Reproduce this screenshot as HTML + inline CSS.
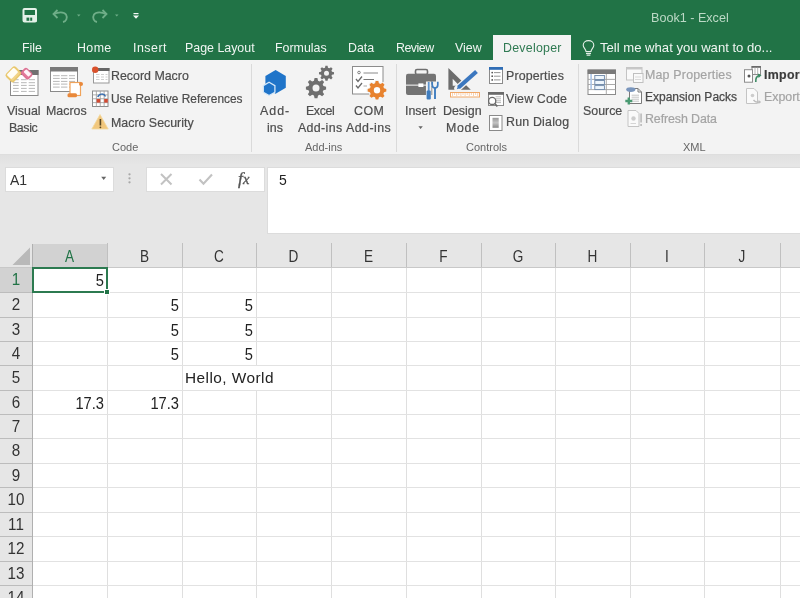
<!DOCTYPE html>
<html><head><meta charset="utf-8">
<style>
*{margin:0;padding:0;box-sizing:border-box}
html,body{width:800px;height:598px;overflow:hidden;background:#e6e6e6}
body{font-family:"Liberation Sans",sans-serif;position:relative}
#root{position:absolute;left:0;top:0;width:800px;height:598px;overflow:hidden;will-change:transform}
.a{position:absolute;white-space:nowrap;line-height:1}
#title{left:0;top:0;width:800px;height:60px;background:#217346}
#devtab{left:493px;top:35px;width:78px;height:25px;background:#f3f3f3}
.tab{font-size:12.4px;color:#f0f5f2;top:42px}
#ribbon{left:0;top:60px;width:800px;height:95px;background:#f3f3f3;border-bottom:1px solid #dedede}
.rt{font-size:12.4px;color:#4d4d4d;-webkit-text-stroke:0.2px #4d4d4d}
.gl{font-size:11px;color:#666;top:142px}
.sep{width:1px;background:#dadada;top:64px;height:88px}
.dis{color:#a4a4a4;-webkit-text-stroke-color:#a4a4a4}
#fbar{left:0;top:155px;width:800px;height:89px;background:#e6e6e6}
.box{background:#fff;border:1px solid #dcdcdc}
#grid{left:0;top:244px;width:800px;height:354px;background:#fff}
.ch{font-size:14px;color:#333}
.cell{font-size:15.4px;color:#222;letter-spacing:0.45px}
.num{font-size:16.5px;letter-spacing:0;transform:scaleX(0.89);transform-origin:right center}
</style></head><body><div id="root">
<div id="title" class="a"></div>
<div id="devtab" class="a"></div>
<div class="a tab" style="left:22px">File</div>
<div class="a tab" style="left:77px;letter-spacing:0.4px">Home</div>
<div class="a tab" style="left:133px;letter-spacing:0.5px">Insert</div>
<div class="a tab" style="left:185px">Page Layout</div>
<div class="a tab" style="left:275px">Formulas</div>
<div class="a tab" style="left:348px">Data</div>
<div class="a tab" style="left:396px;letter-spacing:-0.5px">Review</div>
<div class="a tab" style="left:455px">View</div>
<div class="a tab" style="left:503px;color:#2f7a52;letter-spacing:0.25px">Developer</div>
<div class="a tab" style="left:600px;font-size:13.1px;top:41px">Tell me what you want to do...</div>
<div class="a" style="left:651px;top:12px;font-size:12.6px;color:#bcd9c6">Book1 - Excel</div>

<div id="ribbon" class="a"></div>
<!-- Code group -->
<div class="a rt" style="left:7px;top:105px">Visual</div>
<div class="a rt" style="left:9px;top:122px;letter-spacing:-0.4px">Basic</div>
<div class="a rt" style="left:46px;top:105px">Macros</div>
<div class="a rt" style="left:111px;top:70px">Record Macro</div>
<div class="a rt" style="left:111px;top:94px;font-size:11.9px">Use Relative References</div>
<div class="a rt" style="left:111px;top:117px">Macro Security</div>
<div class="a gl" style="left:112px">Code</div>
<div class="a sep" style="left:251px"></div>
<!-- Add-ins group -->
<div class="a rt" style="left:260px;top:105px;letter-spacing:1px">Add-</div>
<div class="a rt" style="left:267px;top:122px">ins</div>
<div class="a rt" style="left:306px;top:105px;letter-spacing:-0.4px">Excel</div>
<div class="a rt" style="left:298px;top:122px;letter-spacing:0.35px">Add-ins</div>
<div class="a rt" style="left:354px;top:105px;letter-spacing:0.5px">COM</div>
<div class="a rt" style="left:346px;top:122px;letter-spacing:0.45px">Add-ins</div>
<div class="a gl" style="left:305px">Add-ins</div>
<div class="a sep" style="left:396px"></div>
<!-- Controls group -->
<div class="a rt" style="left:405px;top:105px">Insert</div>
<div class="a rt" style="left:443px;top:105px">Design</div>
<div class="a rt" style="left:446px;top:122px;letter-spacing:0.7px">Mode</div>
<div class="a rt" style="left:506px;top:70px;letter-spacing:0.15px">Properties</div>
<div class="a rt" style="left:506px;top:93px;letter-spacing:0.15px">View Code</div>
<div class="a rt" style="left:506px;top:116px;letter-spacing:0.2px">Run Dialog</div>
<div class="a gl" style="left:466px">Controls</div>
<div class="a sep" style="left:578px"></div>
<!-- XML group -->
<div class="a rt" style="left:583px;top:105px">Source</div>
<div class="a rt dis" style="left:645px;top:69px;letter-spacing:0.2px">Map Properties</div>
<div class="a rt" style="left:645px;top:91px;font-size:12px;-webkit-text-stroke:0.25px #444">Expansion Packs</div>
<div class="a rt dis" style="left:645px;top:113px;letter-spacing:-0.1px">Refresh Data</div>
<div class="a rt" style="left:764px;top:69px;font-weight:bold;color:#3a3a3a;letter-spacing:0.3px">Import</div>
<div class="a rt dis" style="left:764px;top:91px">Export</div>
<div class="a gl" style="left:683px">XML</div>

<div id="fbar" class="a"></div>
<div class="a" style="left:0;top:155px;width:800px;height:9px;background:linear-gradient(#e1e1e1,#e5e5e5)"></div>
<div class="a box" style="left:5px;top:167px;width:109px;height:25px"></div>
<div class="a" style="left:10px;top:173px;font-size:14px;color:#333">A1</div>
<div class="a box" style="left:146px;top:167px;width:119px;height:25px"></div>
<div class="a box" style="left:267px;top:167px;width:540px;height:67px"></div>
<div class="a" style="left:279px;top:173px;font-size:14px;color:#222">5</div>

<div id="grid" class="a"></div>
<!--GRID-->
<div class="a" style="left:0;top:244px;width:800px;height:24px;background:#e6e6e6"></div>
<div class="a" style="left:32px;top:244px;width:75px;height:24px;background:#d2d2d2"></div>
<div class="a" style="left:0;top:268px;width:32px;height:330px;background:#e6e6e6"></div>
<div class="a" style="left:0;top:268px;width:32px;height:24px;background:#d2d2d2"></div>
<div class="a" style="left:107px;top:268px;width:1px;height:330px;background:#dfdfdf"></div>
<div class="a" style="left:107px;top:243px;width:1px;height:24px;background:#c0c0c0"></div>
<div class="a" style="left:182px;top:268px;width:1px;height:330px;background:#dfdfdf"></div>
<div class="a" style="left:182px;top:243px;width:1px;height:24px;background:#c0c0c0"></div>
<div class="a" style="left:256px;top:268px;width:1px;height:330px;background:#dfdfdf"></div>
<div class="a" style="left:256px;top:243px;width:1px;height:24px;background:#c0c0c0"></div>
<div class="a" style="left:331px;top:268px;width:1px;height:330px;background:#dfdfdf"></div>
<div class="a" style="left:331px;top:243px;width:1px;height:24px;background:#c0c0c0"></div>
<div class="a" style="left:406px;top:268px;width:1px;height:330px;background:#dfdfdf"></div>
<div class="a" style="left:406px;top:243px;width:1px;height:24px;background:#c0c0c0"></div>
<div class="a" style="left:481px;top:268px;width:1px;height:330px;background:#dfdfdf"></div>
<div class="a" style="left:481px;top:243px;width:1px;height:24px;background:#c0c0c0"></div>
<div class="a" style="left:555px;top:268px;width:1px;height:330px;background:#dfdfdf"></div>
<div class="a" style="left:555px;top:243px;width:1px;height:24px;background:#c0c0c0"></div>
<div class="a" style="left:630px;top:268px;width:1px;height:330px;background:#dfdfdf"></div>
<div class="a" style="left:630px;top:243px;width:1px;height:24px;background:#c0c0c0"></div>
<div class="a" style="left:704px;top:268px;width:1px;height:330px;background:#dfdfdf"></div>
<div class="a" style="left:704px;top:243px;width:1px;height:24px;background:#c0c0c0"></div>
<div class="a" style="left:780px;top:268px;width:1px;height:330px;background:#dfdfdf"></div>
<div class="a" style="left:780px;top:243px;width:1px;height:24px;background:#c0c0c0"></div>
<div class="a" style="left:32px;top:292px;width:768px;height:1px;background:#e2e2e2"></div>
<div class="a" style="left:0;top:292px;width:32px;height:1px;background:#bcbcbc"></div>
<div class="a" style="left:32px;top:317px;width:768px;height:1px;background:#e2e2e2"></div>
<div class="a" style="left:0;top:317px;width:32px;height:1px;background:#bcbcbc"></div>
<div class="a" style="left:32px;top:341px;width:768px;height:1px;background:#e2e2e2"></div>
<div class="a" style="left:0;top:341px;width:32px;height:1px;background:#bcbcbc"></div>
<div class="a" style="left:32px;top:365px;width:768px;height:1px;background:#e2e2e2"></div>
<div class="a" style="left:0;top:365px;width:32px;height:1px;background:#bcbcbc"></div>
<div class="a" style="left:32px;top:390px;width:768px;height:1px;background:#e2e2e2"></div>
<div class="a" style="left:0;top:390px;width:32px;height:1px;background:#bcbcbc"></div>
<div class="a" style="left:32px;top:414px;width:768px;height:1px;background:#e2e2e2"></div>
<div class="a" style="left:0;top:414px;width:32px;height:1px;background:#bcbcbc"></div>
<div class="a" style="left:32px;top:438px;width:768px;height:1px;background:#e2e2e2"></div>
<div class="a" style="left:0;top:438px;width:32px;height:1px;background:#bcbcbc"></div>
<div class="a" style="left:32px;top:463px;width:768px;height:1px;background:#e2e2e2"></div>
<div class="a" style="left:0;top:463px;width:32px;height:1px;background:#bcbcbc"></div>
<div class="a" style="left:32px;top:487px;width:768px;height:1px;background:#e2e2e2"></div>
<div class="a" style="left:0;top:487px;width:32px;height:1px;background:#bcbcbc"></div>
<div class="a" style="left:32px;top:512px;width:768px;height:1px;background:#e2e2e2"></div>
<div class="a" style="left:0;top:512px;width:32px;height:1px;background:#bcbcbc"></div>
<div class="a" style="left:32px;top:536px;width:768px;height:1px;background:#e2e2e2"></div>
<div class="a" style="left:0;top:536px;width:32px;height:1px;background:#bcbcbc"></div>
<div class="a" style="left:32px;top:561px;width:768px;height:1px;background:#e2e2e2"></div>
<div class="a" style="left:0;top:561px;width:32px;height:1px;background:#bcbcbc"></div>
<div class="a" style="left:32px;top:585px;width:768px;height:1px;background:#e2e2e2"></div>
<div class="a" style="left:0;top:585px;width:32px;height:1px;background:#bcbcbc"></div>
<div class="a" style="left:0;top:267px;width:800px;height:1px;background:#c8c8c8"></div>
<div class="a" style="left:32px;top:244px;width:1px;height:354px;background:#b0b0b0"></div>
<div class="a ch" style="left:32px;width:75px;text-align:center;top:249px;color:#217346;font-size:15.8px;transform:scaleX(0.86)">A</div>
<div class="a ch" style="left:107px;width:75px;text-align:center;top:249px;color:#333;font-size:15.8px;transform:scaleX(0.86)">B</div>
<div class="a ch" style="left:182px;width:74px;text-align:center;top:249px;color:#333;font-size:15.8px;transform:scaleX(0.86)">C</div>
<div class="a ch" style="left:256px;width:75px;text-align:center;top:249px;color:#333;font-size:15.8px;transform:scaleX(0.86)">D</div>
<div class="a ch" style="left:331px;width:75px;text-align:center;top:249px;color:#333;font-size:15.8px;transform:scaleX(0.86)">E</div>
<div class="a ch" style="left:406px;width:75px;text-align:center;top:249px;color:#333;font-size:15.8px;transform:scaleX(0.86)">F</div>
<div class="a ch" style="left:481px;width:74px;text-align:center;top:249px;color:#333;font-size:15.8px;transform:scaleX(0.86)">G</div>
<div class="a ch" style="left:555px;width:75px;text-align:center;top:249px;color:#333;font-size:15.8px;transform:scaleX(0.86)">H</div>
<div class="a ch" style="left:630px;width:74px;text-align:center;top:249px;color:#333;font-size:15.8px;transform:scaleX(0.86)">I</div>
<div class="a ch" style="left:704px;width:76px;text-align:center;top:249px;color:#333;font-size:15.8px;transform:scaleX(0.86)">J</div>
<div class="a ch" style="left:0;width:32px;text-align:center;top:271px;color:#217346;font-size:16.5px;transform:scaleX(0.92)">1</div>
<div class="a ch" style="left:0;width:32px;text-align:center;top:296px;color:#333;font-size:16.5px;transform:scaleX(0.92)">2</div>
<div class="a ch" style="left:0;width:32px;text-align:center;top:321px;color:#333;font-size:16.5px;transform:scaleX(0.92)">3</div>
<div class="a ch" style="left:0;width:32px;text-align:center;top:345px;color:#333;font-size:16.5px;transform:scaleX(0.92)">4</div>
<div class="a ch" style="left:0;width:32px;text-align:center;top:369px;color:#333;font-size:16.5px;transform:scaleX(0.92)">5</div>
<div class="a ch" style="left:0;width:32px;text-align:center;top:394px;color:#333;font-size:16.5px;transform:scaleX(0.92)">6</div>
<div class="a ch" style="left:0;width:32px;text-align:center;top:418px;color:#333;font-size:16.5px;transform:scaleX(0.92)">7</div>
<div class="a ch" style="left:0;width:32px;text-align:center;top:442px;color:#333;font-size:16.5px;transform:scaleX(0.92)">8</div>
<div class="a ch" style="left:0;width:32px;text-align:center;top:467px;color:#333;font-size:16.5px;transform:scaleX(0.92)">9</div>
<div class="a ch" style="left:0;width:32px;text-align:center;top:491px;color:#333;font-size:16.5px;transform:scaleX(0.92)">10</div>
<div class="a ch" style="left:0;width:32px;text-align:center;top:516px;color:#333;font-size:16.5px;transform:scaleX(0.92)">11</div>
<div class="a ch" style="left:0;width:32px;text-align:center;top:540px;color:#333;font-size:16.5px;transform:scaleX(0.92)">12</div>
<div class="a ch" style="left:0;width:32px;text-align:center;top:565px;color:#333;font-size:16.5px;transform:scaleX(0.92)">13</div>
<div class="a ch" style="left:0;width:32px;text-align:center;top:589px;color:#333;font-size:16.5px;transform:scaleX(0.92)">14</div>
<div class="a" style="left:256px;top:366px;width:1px;height:24px;background:#fff"></div>
<div class="a cell num" style="left:32px;width:72px;text-align:right;top:272px">5</div>
<div class="a cell num" style="left:107px;width:72px;text-align:right;top:297px">5</div>
<div class="a cell num" style="left:182px;width:71px;text-align:right;top:297px">5</div>
<div class="a cell num" style="left:107px;width:72px;text-align:right;top:322px">5</div>
<div class="a cell num" style="left:182px;width:71px;text-align:right;top:322px">5</div>
<div class="a cell num" style="left:107px;width:72px;text-align:right;top:346px">5</div>
<div class="a cell num" style="left:182px;width:71px;text-align:right;top:346px">5</div>
<div class="a cell" style="left:185px;top:370px">Hello, World</div>
<div class="a cell num" style="left:32px;width:72px;text-align:right;top:395px">17.3</div>
<div class="a cell num" style="left:107px;width:72px;text-align:right;top:395px">17.3</div>
<div class="a" style="left:32px;top:267px;width:76px;height:26px;border:2px solid #2c7a50"></div>
<div class="a" style="left:104px;top:289px;width:6px;height:6px;background:#217346;border:1px solid #fff"></div>
<!--/GRID-->
<!--ICONS-->
<svg class="a" style="left:0;top:0" width="800" height="598" viewBox="0 0 800 598">
<rect x="23.5" y="9" width="12.5" height="12.5" rx="1" fill="none" stroke="#e4f1e8" stroke-width="2"/>
<rect x="23" y="15" width="13.5" height="7" fill="#e4f1e8"/>
<rect x="26.5" y="17.6" width="2.8" height="3.2" fill="#217346"/><rect x="30.2" y="17.6" width="2" height="3.2" fill="#217346"/>
<path d="M54,14 C58,12 64,11.5 66,14.5 C68,18 66,21.5 63,22" fill="none" stroke="#6fae88" stroke-width="1.8"/>
<path d="M57.5,10 L53.5,14 L57.5,18" fill="none" stroke="#6fae88" stroke-width="1.8"/>
<path d="M77,14.5 L80.5,14.5 L78.75,16.5Z" fill="#6fae88"/>
<path d="M106,14 C102,12 96,11.5 94,14.5 C92,18 94,21.5 97,22" fill="none" stroke="#6fae88" stroke-width="1.8"/>
<path d="M102.5,10 L106.5,14 L102.5,18" fill="none" stroke="#6fae88" stroke-width="1.8"/>
<path d="M115,14.5 L118.5,14.5 L116.75,16.5Z" fill="#6fae88"/>
<rect x="133.5" y="13" width="5" height="1.2" fill="#f4f9f6"/><path d="M133,15.5 L139,15.5 L136,18.8Z" fill="#f4f9f6"/>
<path d="M586,51.5 C586,49.2 583.2,48 583.2,45.3 C583.2,42.4 585.6,40.6 588.5,40.6 C591.4,40.6 593.8,42.4 593.8,45.3 C593.8,48 591,49.2 591,51.5 Z" fill="none" stroke="#e3efe7" stroke-width="1.1"/>
<path d="M586,53.3 L591,53.3 M586.6,55.1 L590.4,55.1" stroke="#e3efe7" stroke-width="1.3"/>
<rect x="10.5" y="70.5" width="27.5" height="25" fill="#fff" stroke="#8a8a8a"/>
<rect x="10" y="70" width="28.5" height="5" fill="#707070"/>
<line x1="13" y1="79.7" x2="18.7" y2="79.7" stroke="#b8b8b8" stroke-width="1"/>
<line x1="21" y1="79.7" x2="26.7" y2="79.7" stroke="#b8b8b8" stroke-width="1"/>
<line x1="28.7" y1="79.7" x2="35" y2="79.7" stroke="#b8b8b8" stroke-width="1"/>
<line x1="13" y1="82.7" x2="18.7" y2="82.7" stroke="#b8b8b8" stroke-width="1"/>
<line x1="21" y1="82.7" x2="26.7" y2="82.7" stroke="#b8b8b8" stroke-width="1"/>
<line x1="28.7" y1="82.7" x2="35" y2="82.7" stroke="#b8b8b8" stroke-width="1"/>
<line x1="13" y1="85.4" x2="18.7" y2="85.4" stroke="#b8b8b8" stroke-width="1"/>
<line x1="21" y1="85.4" x2="26.7" y2="85.4" stroke="#b8b8b8" stroke-width="1"/>
<line x1="28.7" y1="85.4" x2="35" y2="85.4" stroke="#b8b8b8" stroke-width="1"/>
<line x1="13" y1="88.4" x2="18.7" y2="88.4" stroke="#b8b8b8" stroke-width="1"/>
<line x1="21" y1="88.4" x2="26.7" y2="88.4" stroke="#b8b8b8" stroke-width="1"/>
<line x1="28.7" y1="88.4" x2="35" y2="88.4" stroke="#b8b8b8" stroke-width="1"/>
<line x1="13" y1="91.4" x2="18.7" y2="91.4" stroke="#b8b8b8" stroke-width="1"/>
<line x1="21" y1="91.4" x2="26.7" y2="91.4" stroke="#b8b8b8" stroke-width="1"/>
<line x1="28.7" y1="91.4" x2="35" y2="91.4" stroke="#b8b8b8" stroke-width="1"/>
<g transform="rotate(-46 13.4 74.3)"><rect x="7.2" y="69.4" width="12.4" height="9.8" rx="1.8" fill="#f2d48a" stroke="#e9c86e" stroke-width="1.6"/><rect x="8.4" y="69.8" width="10" height="6.4" rx="1" fill="#fffdf6"/></g>
<g transform="rotate(45 26.7 73.7)"><rect x="22.1" y="70.2" width="9.2" height="7" rx="1.6" fill="#e27b9b" stroke="#dd7394" stroke-width="1.5"/><rect x="23.2" y="70.7" width="7" height="4" rx="0.8" fill="#fff6f9"/></g>
<rect x="50.5" y="67.5" width="27" height="24" fill="#fff" stroke="#8a8a8a"/>
<rect x="50" y="67" width="28" height="4.5" fill="#7a7a7a"/>
<line x1="53" y1="75.7" x2="59.7" y2="75.7" stroke="#b8b8b8" stroke-width="1"/>
<line x1="61" y1="75.7" x2="67.4" y2="75.7" stroke="#b8b8b8" stroke-width="1"/>
<line x1="69" y1="75.7" x2="75" y2="75.7" stroke="#b8b8b8" stroke-width="1"/>
<line x1="53" y1="78.4" x2="59.7" y2="78.4" stroke="#b8b8b8" stroke-width="1"/>
<line x1="61" y1="78.4" x2="67.4" y2="78.4" stroke="#b8b8b8" stroke-width="1"/>
<line x1="69" y1="78.4" x2="75" y2="78.4" stroke="#b8b8b8" stroke-width="1"/>
<line x1="53" y1="81.4" x2="59.7" y2="81.4" stroke="#b8b8b8" stroke-width="1"/>
<line x1="61" y1="81.4" x2="67.4" y2="81.4" stroke="#b8b8b8" stroke-width="1"/>
<line x1="69" y1="81.4" x2="75" y2="81.4" stroke="#b8b8b8" stroke-width="1"/>
<line x1="53" y1="84.1" x2="59.7" y2="84.1" stroke="#b8b8b8" stroke-width="1"/>
<line x1="61" y1="84.1" x2="67.4" y2="84.1" stroke="#b8b8b8" stroke-width="1"/>
<line x1="69" y1="84.1" x2="75" y2="84.1" stroke="#b8b8b8" stroke-width="1"/>
<line x1="53" y1="87.1" x2="59.7" y2="87.1" stroke="#b8b8b8" stroke-width="1"/>
<line x1="61" y1="87.1" x2="67.4" y2="87.1" stroke="#b8b8b8" stroke-width="1"/>
<line x1="69" y1="87.1" x2="75" y2="87.1" stroke="#b8b8b8" stroke-width="1"/>
<rect x="70" y="82.5" width="10.5" height="13" fill="#fff" stroke="#f0a35a" stroke-width="1.2"/>
<circle cx="81" cy="84" r="2" fill="#e9883a"/>
<rect x="67.5" y="93.2" width="9.5" height="4" rx="1.5" fill="#e9883a"/>
<rect x="93.5" y="68.5" width="15.5" height="14.5" fill="#fff" stroke="#999"/>
<rect x="93" y="68" width="16.5" height="3" fill="#666"/>
<line x1="96" y1="74.5" x2="99.5" y2="74.5" stroke="#c4c4c4" stroke-width="0.8"/>
<line x1="101" y1="74.5" x2="104" y2="74.5" stroke="#c4c4c4" stroke-width="0.8"/>
<line x1="105.5" y1="74.5" x2="107.5" y2="74.5" stroke="#c4c4c4" stroke-width="0.8"/>
<line x1="96" y1="77" x2="99.5" y2="77" stroke="#c4c4c4" stroke-width="0.8"/>
<line x1="101" y1="77" x2="104" y2="77" stroke="#c4c4c4" stroke-width="0.8"/>
<line x1="105.5" y1="77" x2="107.5" y2="77" stroke="#c4c4c4" stroke-width="0.8"/>
<line x1="96" y1="79.5" x2="99.5" y2="79.5" stroke="#c4c4c4" stroke-width="0.8"/>
<line x1="101" y1="79.5" x2="104" y2="79.5" stroke="#c4c4c4" stroke-width="0.8"/>
<line x1="105.5" y1="79.5" x2="107.5" y2="79.5" stroke="#c4c4c4" stroke-width="0.8"/>
<circle cx="95.2" cy="69.8" r="3.2" fill="#d9512c"/>
<rect x="92.5" y="91" width="15.5" height="15.5" fill="#fff" stroke="#8c8c8c"/>
<line x1="96.375" y1="91" x2="96.375" y2="106.5" stroke="#9a9a9a" stroke-width="0.8"/>
<line x1="92.5" y1="94.875" x2="108" y2="94.875" stroke="#9a9a9a" stroke-width="0.8"/>
<line x1="100.25" y1="91" x2="100.25" y2="106.5" stroke="#9a9a9a" stroke-width="0.8"/>
<line x1="92.5" y1="98.75" x2="108" y2="98.75" stroke="#9a9a9a" stroke-width="0.8"/>
<line x1="104.125" y1="91" x2="104.125" y2="106.5" stroke="#9a9a9a" stroke-width="0.8"/>
<line x1="92.5" y1="102.625" x2="108" y2="102.625" stroke="#9a9a9a" stroke-width="0.8"/>
<rect x="96.6" y="99" width="3.6" height="3.6" fill="#d24a32"/><rect x="104.2" y="99" width="3.6" height="3.6" fill="#d24a32"/>
<path d="M97.8,97 C99,93.5 104,93 105.5,96.5" fill="none" stroke="#3a6fb0" stroke-width="1.5"/>
<path d="M100,114.5 L108.2,129 L91.8,129 Z" fill="#f1c77d" stroke="#f3d9a0" stroke-width="0.8" stroke-linejoin="round"/>
<path d="M100.4,119 L100.4,125.5" stroke="#5a4824" stroke-width="1.6"/><circle cx="100.4" cy="127.3" r="0.9" fill="#5a4824"/>
<path d="M275.60,70.00 L285.80,75.95 L285.80,87.85 L275.60,93.80 L265.40,87.85 L265.40,75.95Z" fill="#1f74c9"/>
<path d="M269.10,82.30 L274.90,85.60 L274.90,92.20 L269.10,95.50 L263.30,92.20 L263.30,85.60Z" fill="#1f74c9" stroke="#d6e8f8" stroke-width="1.3"/>
<path d="M313.97,80.67 L314.56,78.00 L317.44,78.00 L318.03,80.67 L319.82,81.41 L322.12,79.94 L324.16,81.98 L322.69,84.28 L323.43,86.07 L326.10,86.66 L326.10,89.54 L323.43,90.13 L322.69,91.92 L324.16,94.22 L322.12,96.26 L319.82,94.79 L318.03,95.53 L317.44,98.20 L314.56,98.20 L313.97,95.53 L312.18,94.79 L309.88,96.26 L307.84,94.22 L309.31,91.92 L308.57,90.13 L305.90,89.54 L305.90,86.66 L308.57,86.07 L309.31,84.28 L307.84,81.98 L309.88,79.94 L312.18,81.41Z M319.50,88.10 A3.5,3.5 0 1,0 312.50,88.10 A3.5,3.5 0 1,0 319.50,88.10Z" fill="#6f6f6f" fill-rule="evenodd"/>
<path d="M325.00,67.80 L325.43,65.78 L327.57,65.78 L328.00,67.80 L329.32,68.35 L331.06,67.22 L332.58,68.74 L331.45,70.48 L332.00,71.80 L334.02,72.23 L334.02,74.37 L332.00,74.80 L331.45,76.12 L332.58,77.86 L331.06,79.38 L329.32,78.25 L328.00,78.80 L327.57,80.82 L325.43,80.82 L325.00,78.80 L323.68,78.25 L321.94,79.38 L320.42,77.86 L321.55,76.12 L321.00,74.80 L318.98,74.37 L318.98,72.23 L321.00,71.80 L321.55,70.48 L320.42,68.74 L321.94,67.22 L323.68,68.35Z M329.00,73.30 A2.5,2.5 0 1,0 324.00,73.30 A2.5,2.5 0 1,0 329.00,73.30Z" fill="#6f6f6f" fill-rule="evenodd"/>
<rect x="352.5" y="66.5" width="30.5" height="27.5" fill="#fff" stroke="#8c8c8c"/>
<circle cx="359" cy="72.5" r="1.3" fill="none" stroke="#777" stroke-width="0.9"/>
<line x1="363.5" y1="73" x2="378" y2="73" stroke="#8a8a8a" stroke-width="1"/>
<path d="M356,79 L358,81.5 L362,76.5" fill="none" stroke="#6a6a6a" stroke-width="1.3"/><line x1="363.5" y1="79.5" x2="374" y2="79.5" stroke="#777" stroke-width="1"/>
<path d="M356,85.5 L358,88 L362,83" fill="none" stroke="#6a6a6a" stroke-width="1.3"/><line x1="363.5" y1="86" x2="367" y2="86" stroke="#aaa" stroke-width="1"/>
<path d="M374.73,82.00 L375.51,79.81 L378.49,79.81 L379.27,82.00 L381.26,82.83 L383.36,81.82 L385.48,83.94 L384.47,86.04 L385.30,88.03 L387.49,88.81 L387.49,91.79 L385.30,92.57 L384.47,94.56 L385.48,96.66 L383.36,98.78 L381.26,97.77 L379.27,98.60 L378.49,100.79 L375.51,100.79 L374.73,98.60 L372.74,97.77 L370.64,98.78 L368.52,96.66 L369.53,94.56 L368.70,92.57 L366.51,91.79 L366.51,88.81 L368.70,88.03 L369.53,86.04 L368.52,83.94 L370.64,81.82 L372.74,82.83Z M380.00,90.30 A3.0,3.0 0 1,0 374.00,90.30 A3.0,3.0 0 1,0 380.00,90.30Z" fill="#f3f3f3" fill-rule="evenodd"/>
<path d="M375.07,83.26 L375.68,80.99 L378.32,80.99 L378.93,83.26 L380.62,83.96 L382.64,82.78 L384.52,84.66 L383.34,86.68 L384.04,88.37 L386.31,88.98 L386.31,91.62 L384.04,92.23 L383.34,93.92 L384.52,95.94 L382.64,97.82 L380.62,96.64 L378.93,97.34 L378.32,99.61 L375.68,99.61 L375.07,97.34 L373.38,96.64 L371.36,97.82 L369.48,95.94 L370.66,93.92 L369.96,92.23 L367.69,91.62 L367.69,88.98 L369.96,88.37 L370.66,86.68 L369.48,84.66 L371.36,82.78 L373.38,83.96Z M380.20,90.30 A3.2,3.2 0 1,0 373.80,90.30 A3.2,3.2 0 1,0 380.20,90.30Z" fill="#e8832f" fill-rule="evenodd"/>
<rect x="415.5" y="69.5" width="12" height="5" rx="1.5" fill="none" stroke="#6f6f6f" stroke-width="1.6"/>
<rect x="406" y="73.7" width="30" height="21.4" rx="2" fill="#737373"/>
<rect x="406" y="84.4" width="30" height="1.6" fill="#c8c8c8"/>
<rect x="418.4" y="83.4" width="5" height="3.6" fill="#fff"/>
<path d="M428.7,81.5 L428.7,99.8 M435,81.5 L435,99.3" stroke="#f3f3f3" stroke-width="5.5"/>
<path d="M428.7,82 L428.7,91" stroke="#5b93cf" stroke-width="1.8"/>
<rect x="426.6" y="90.5" width="4.2" height="9" rx="1" fill="#3f7dbf"/>
<path d="M435,87 L435,99" stroke="#3f7dbf" stroke-width="1.9"/>
<path d="M432.2,81.8 L432.2,84.8 Q432.2,88 435,88 Q437.8,88 437.8,84.8 L437.8,81.8" fill="none" stroke="#3f7dbf" stroke-width="1.7"/>
<path d="M418.4,126.2 L422.8,126.2 L420.6,128.9Z" fill="#666"/>
<path d="M448.4,68 L448.4,89.8 L470.8,89.8 Z M452.7,78.7 L452.7,85.7 L459.4,85.7 Z" fill="#6d6d6d" fill-rule="evenodd"/>
<path d="M457.5,88.5 L477.5,70.5" stroke="#f3f3f3" stroke-width="6.5" stroke-linecap="round"/>
<path d="M458.5,87.5 L476.5,71.5" stroke="#3b77bf" stroke-width="4.2"/>
<path d="M456.8,89.2 L458,86 L460,88.2Z" fill="#3b77bf"/>
<rect x="450.5" y="92.5" width="29" height="4.5" fill="#fff" stroke="#f0a868" stroke-width="1"/>
<line x1="452.50" y1="93" x2="452.50" y2="96" stroke="#f4c096" stroke-width="0.7"/>
<line x1="454.60" y1="93" x2="454.60" y2="95" stroke="#f4c096" stroke-width="0.7"/>
<line x1="456.70" y1="93" x2="456.70" y2="96" stroke="#f4c096" stroke-width="0.7"/>
<line x1="458.80" y1="93" x2="458.80" y2="95" stroke="#f4c096" stroke-width="0.7"/>
<line x1="460.90" y1="93" x2="460.90" y2="96" stroke="#f4c096" stroke-width="0.7"/>
<line x1="463.00" y1="93" x2="463.00" y2="95" stroke="#f4c096" stroke-width="0.7"/>
<line x1="465.10" y1="93" x2="465.10" y2="96" stroke="#f4c096" stroke-width="0.7"/>
<line x1="467.20" y1="93" x2="467.20" y2="95" stroke="#f4c096" stroke-width="0.7"/>
<line x1="469.30" y1="93" x2="469.30" y2="96" stroke="#f4c096" stroke-width="0.7"/>
<line x1="471.40" y1="93" x2="471.40" y2="95" stroke="#f4c096" stroke-width="0.7"/>
<line x1="473.50" y1="93" x2="473.50" y2="96" stroke="#f4c096" stroke-width="0.7"/>
<line x1="475.60" y1="93" x2="475.60" y2="95" stroke="#f4c096" stroke-width="0.7"/>
<line x1="477.70" y1="93" x2="477.70" y2="96" stroke="#f4c096" stroke-width="0.7"/>
<rect x="489.5" y="67.5" width="13" height="16" fill="#fff" stroke="#8a8a8a"/>
<rect x="489" y="67" width="14" height="2.8" fill="#2f6db5"/>
<circle cx="492.2" cy="72.6" r="0.9" fill="#555"/><line x1="494" y1="72.6" x2="500.5" y2="72.6" stroke="#888" stroke-width="0.9"/>
<circle cx="492.2" cy="76.2" r="0.9" fill="#555"/><line x1="494" y1="76.2" x2="500.5" y2="76.2" stroke="#888" stroke-width="0.9"/>
<circle cx="492.2" cy="79.9" r="0.9" fill="#555"/><line x1="494" y1="79.9" x2="500.5" y2="79.9" stroke="#888" stroke-width="0.9"/>
<rect x="488.5" y="92.5" width="15" height="13" fill="#fff" stroke="#8a8a8a"/>
<rect x="488" y="92" width="16" height="2.8" fill="#6a6a6a"/>
<line x1="495.6" y1="96.8" x2="501" y2="96.8" stroke="#999" stroke-width="0.7"/>
<line x1="495.6" y1="98.8" x2="501" y2="98.8" stroke="#999" stroke-width="0.7"/>
<line x1="495.6" y1="100.8" x2="501" y2="100.8" stroke="#999" stroke-width="0.7"/>
<line x1="495.6" y1="102.6" x2="501" y2="102.6" stroke="#999" stroke-width="0.7"/>
<circle cx="492.2" cy="100.9" r="3.6" fill="#fff" stroke="#6a6a6a" stroke-width="1.3"/>
<line x1="494.8" y1="103.5" x2="497.3" y2="106.5" stroke="#6a6a6a" stroke-width="1.6"/>
<rect x="489.5" y="115.5" width="12.5" height="15" fill="#fff" stroke="#8a8a8a"/>
<defs><linearGradient id="gr" x1="0" y1="0" x2="0" y2="1"><stop offset="0" stop-color="#999"/><stop offset="0.5" stop-color="#c4c4c4"/><stop offset="1" stop-color="#8a8a8a"/></linearGradient></defs>
<rect x="492.5" y="117.8" width="6.2" height="10" fill="url(#gr)"/>
<rect x="588" y="70" width="27.5" height="24.5" fill="#fff" stroke="#8a8a8a"/>
<rect x="587.6" y="69.6" width="28.3" height="4.4" fill="#7a7a7a"/>
<line x1="588" y1="79.4" x2="615.5" y2="79.4" stroke="#a0a0a0" stroke-width="0.9"/>
<line x1="588" y1="84.5" x2="615.5" y2="84.5" stroke="#a0a0a0" stroke-width="0.9"/>
<line x1="588" y1="89.6" x2="615.5" y2="89.6" stroke="#a0a0a0" stroke-width="0.9"/>
<line x1="606.3" y1="74" x2="606.3" y2="94.5" stroke="#a0a0a0" stroke-width="0.9"/>
<rect x="590.3" y="74" width="1.6" height="15" fill="#aac4e6"/>
<rect x="594.8" y="75.5" width="9.6" height="4" fill="#eef6fd" stroke="#6d87a8" stroke-width="0.9"/>
<rect x="594.8" y="80.5" width="9.6" height="4" fill="#eef6fd" stroke="#6d87a8" stroke-width="0.9"/>
<rect x="594.8" y="85.6" width="9.6" height="4" fill="#eef6fd" stroke="#6d87a8" stroke-width="0.9"/>
<rect x="626.5" y="67.5" width="15.5" height="12.5" fill="#fafafa" stroke="#c4c4c4"/>
<rect x="626.5" y="67.5" width="15.5" height="2" fill="#c8c8c8"/>
<rect x="633.5" y="73.5" width="9.5" height="9" fill="#fafafa" stroke="#c0c0c0"/>
<line x1="635" y1="77" x2="641" y2="77" stroke="#ccc" stroke-width="0.7"/><line x1="635" y1="79.5" x2="641" y2="79.5" stroke="#ccc" stroke-width="0.7"/>
<path d="M629.5,88.5 L638,88.5 L641.5,92 L641.5,103.5 L629.5,103.5 Z" fill="#fff" stroke="#7a7a7a"/>
<path d="M638,88.5 L638,92 L641.5,92" fill="none" stroke="#7a7a7a"/>
<line x1="631.6" y1="95.2" x2="639" y2="95.2" stroke="#aaa" stroke-width="0.7"/>
<line x1="631.6" y1="97.2" x2="639" y2="97.2" stroke="#aaa" stroke-width="0.7"/>
<line x1="631.6" y1="99.2" x2="639" y2="99.2" stroke="#aaa" stroke-width="0.7"/>
<line x1="631.6" y1="101.2" x2="639" y2="101.2" stroke="#aaa" stroke-width="0.7"/>
<ellipse cx="630.8" cy="89.6" rx="4.6" ry="2.4" fill="#7a96bd"/>
<path d="M628.8,97.5 L628.8,104.5 M625.3,101 L632.3,101" stroke="#4a9a72" stroke-width="2.4"/>
<path d="M628,110.5 L636,110.5 L639,113.5 L639,126.5 L628,126.5 Z" fill="#fafafa" stroke="#c4c4c4"/>
<circle cx="633.5" cy="118.5" r="2.2" fill="#cdcdcd"/>
<line x1="630.5" y1="123.5" x2="636" y2="123.5" stroke="#ccc" stroke-width="0.8"/>
<rect x="640.2" y="113.5" width="1.8" height="9" fill="#c0c0c0"/><rect x="640.2" y="124" width="1.8" height="2" fill="#c0c0c0"/>
<rect x="752" y="66.5" width="8.5" height="8" fill="#fff" stroke="#8a8a8a"/>
<rect x="751.6" y="66" width="9.2" height="1.8" fill="#6a6a6a"/>
<line x1="755" y1="67" x2="755" y2="74.5" stroke="#999" stroke-width="0.7"/><line x1="757.7" y1="67" x2="757.7" y2="74.5" stroke="#999" stroke-width="0.7"/>
<rect x="744.5" y="69.7" width="8" height="12.5" fill="#fff" stroke="#8a8a8a"/>
<circle cx="749" cy="75.9" r="1.5" fill="#555"/>
<path d="M755.8,82 C755.5,78.5 757,76 759.5,75.5" fill="none" stroke="#3b8a63" stroke-width="1.6"/><path d="M757.8,73.6 L761.5,75.3 L758.6,78Z" fill="#3b8a63"/>
<path d="M746.5,88.5 L754,88.5 L757.5,92 L757.5,103.5 L746.5,103.5 Z" fill="#fafafa" stroke="#c4c4c4"/>
<circle cx="752.5" cy="95.5" r="1.8" fill="#cdcdcd"/>
<path d="M753.5,100 C755,102 757,102.5 759,102" fill="none" stroke="#bdbdbd" stroke-width="1.4"/><path d="M758.5,100 L761.2,102 L758.5,104Z" fill="#bdbdbd"/>
<path d="M101.2,176.8 L106.2,176.8 L103.7,180Z" fill="#666"/>
<circle cx="129.5" cy="174.3" r="1.15" fill="#a8a8a8"/>
<circle cx="129.5" cy="178.3" r="1.15" fill="#a8a8a8"/>
<circle cx="129.5" cy="182.3" r="1.15" fill="#a8a8a8"/>
<path d="M161,174 L171.5,184.5 M171.5,174 L161,184.5" stroke="#c2c2c2" stroke-width="2"/>
<path d="M199.5,179.5 L203.5,183.8 L212,174.5" fill="none" stroke="#c2c2c2" stroke-width="2.1"/>
<path d="M30,247.5 L30,265 L12.5,265 Z" fill="#b9b9b9"/>
</svg>
<div class="a" style="left:238px;top:170px;font-family:'Liberation Serif',serif;font-style:italic;font-size:17.5px;color:#555;-webkit-text-stroke:0.35px #555">f<span style="font-size:14.5px">x</span></div>
<!--/ICONS-->
</div></body></html>
